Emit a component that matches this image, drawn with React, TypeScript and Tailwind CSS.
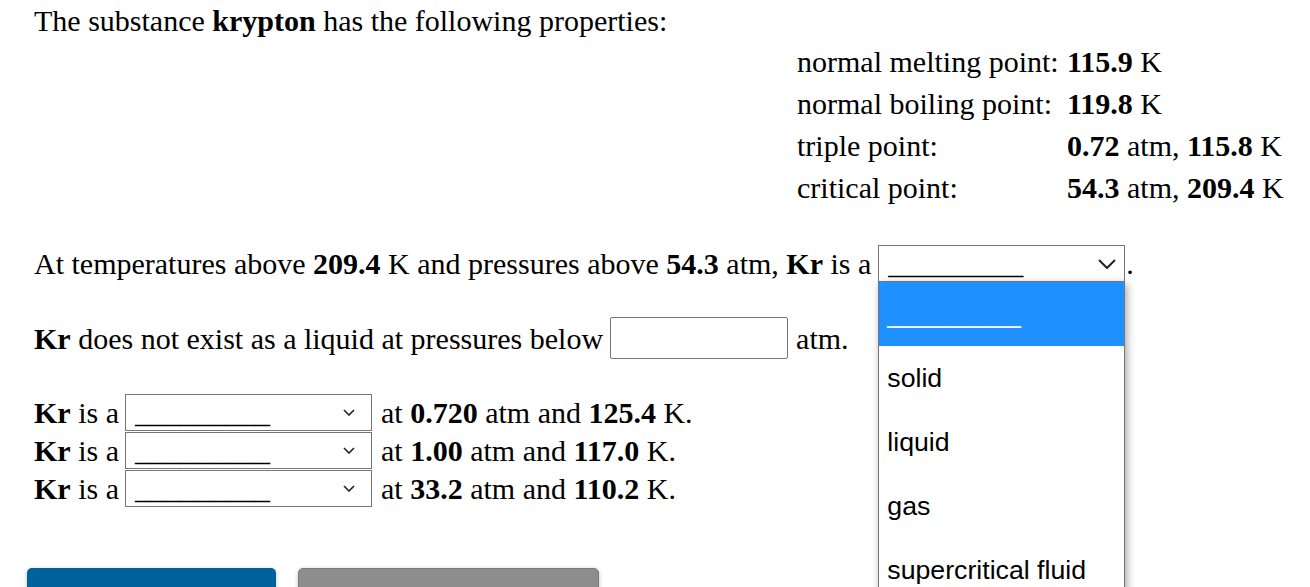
import type { ReactNode } from 'react';

const serif = "font-['Liberation_Serif','Times_New_Roman',serif]";

function Chevron({ big }: { big?: boolean }) {
  if (big) {
    return (
      <svg width="18" height="10" viewBox="0 0 18 10" className="shrink-0">
        <path d="M1 1 L9 9 L17 1" fill="none" stroke="#222" strokeWidth="2" />
      </svg>
    );
  }
  return (
    <svg width="12" height="7" viewBox="0 0 12 7" className="shrink-0">
      <path d="M1 1 L6 6 L11 1" fill="none" stroke="#222" strokeWidth="1.6" />
    </svg>
  );
}

function Blank({ big, gap, children }: { big?: boolean; gap: string; children?: ReactNode }) {
  return (
    <div
      className={`relative ${gap} flex h-[37px] w-[247px] shrink-0 items-center justify-between border border-[#767676] bg-white pl-[9px] ${
        big ? 'pr-[8px]' : 'pr-[16px]'
      }`}
    >
      <span className="leading-[33px]">_________</span>
      <Chevron big={big} />
      {children}
    </div>
  );
}

const options = ['solid', 'liquid', 'gas', 'supercritical fluid'];

function OpenList() {
  return (
    <div className="absolute left-[-1px] right-[-1px] top-full z-10 border border-[#767676] bg-white shadow-[2px_3px_8px_rgba(0,0,0,0.35)] font-['Liberation_Sans',Arial,sans-serif] text-[26.7px] leading-[31px]">
      <div className="flex h-[64px] items-center bg-[#1e90ff] pl-[8px] text-white">_________</div>
      {options.map((o) => (
        <div key={o} className="flex h-[64px] items-center pl-[8px] text-black">
          {o}
        </div>
      ))}
    </div>
  );
}

const props = [
  { label: 'normal melting point:', value: <><b>115.9</b> K</> },
  { label: 'normal boiling point:', value: <><b>119.8</b> K</> },
  { label: 'triple point:', value: <><b>0.72</b> atm, <b>115.8</b> K</> },
  { label: 'critical point:', value: <><b>54.3</b> atm, <b>209.4</b> K</> },
];

const rows = [
  { p: '0.720', t: '125.4' },
  { p: '1.00', t: '117.0' },
  { p: '33.2', t: '110.2' },
];

export default function App() {
  return (
    <div className={`relative h-[587px] w-full overflow-hidden bg-white text-[30px] text-black ${serif}`}>
      <div className="pl-[34px] pt-[4px]">
        <p className="leading-[33px]">
          The substance <b>krypton</b> has the following properties:
        </p>

        <div className="ml-[763px] mt-[4px] grid grid-cols-[270px_auto] leading-[42px]">
          {props.map((r) => (
            <div key={r.label} className="contents">
              <div>{r.label}</div>
              <div className="whitespace-nowrap">{r.value}</div>
            </div>
          ))}
        </div>

        <div className="mt-[36px] flex h-[37px] items-center whitespace-nowrap">
          <span className="leading-[33px]">
            At temperatures above <b>209.4</b> K and pressures above <b>54.3</b> atm, <b>Kr</b> is a
          </span>
          <Blank big gap="ml-[7px]">
            <OpenList />
          </Blank>
          <span className="ml-[1px] leading-[33px]">.</span>
        </div>

        <div className="mt-[35px] flex h-[42px] items-center whitespace-nowrap">
          <span className="leading-[33px]">
            <b>Kr</b> does not exist as a liquid at pressures below
          </span>
          <input
            type="text"
            className="ml-[7px] h-[42px] w-[178px] rounded-[2px] border border-[#767676] bg-white outline-none"
          />
          <span className="ml-[8px] leading-[33px]">atm.</span>
        </div>

        <div className="mt-[35px] flex flex-col gap-[1px]">
          {rows.map((r) => (
            <div key={r.p} className="flex h-[37px] items-center whitespace-nowrap">
              <span className="leading-[33px]">
                <b>Kr</b> is a
              </span>
              <Blank gap="ml-[6px]" />
              <span className="ml-[9px] leading-[33px]">
                at <b>{r.p}</b> atm and <b>{r.t}</b> K.
              </span>
            </div>
          ))}
        </div>
      </div>

      <div className="ml-[27px] mt-[61px] flex gap-[22px]">
        <button className="h-[46px] w-[249px] rounded-[5px] bg-[#00629b] shadow-[0_1px_4px_rgba(0,0,0,0.25)]" />
        <button className="h-[46px] w-[301px] rounded-[5px] border border-[#7a7a7a] bg-[#8d8d8d] shadow-[0_1px_4px_rgba(0,0,0,0.25)]" />
      </div>
    </div>
  );
}
